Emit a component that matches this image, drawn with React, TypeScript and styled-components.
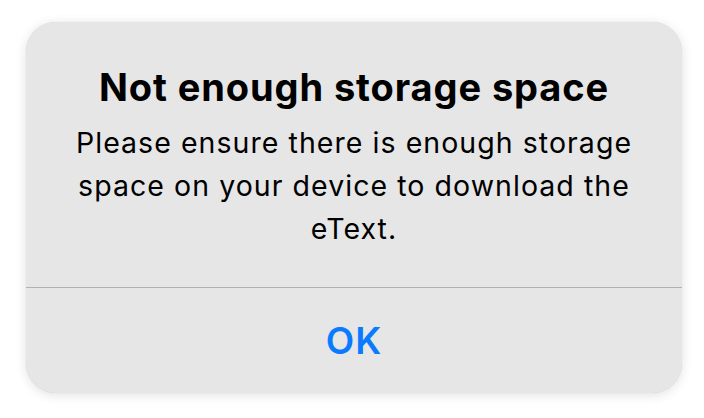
import React from "react";
import styled, { createGlobalStyle } from "styled-components";

const Global = createGlobalStyle`
  html, body { margin: 0; padding: 0; background: #ffffff; }
  body { font-family: Inter, "Noto Sans", sans-serif; -webkit-font-smoothing: antialiased; }
`;

const Page = styled.div`
  width: 704px;
  height: 418px;
  box-sizing: border-box;
  padding: 22px 22px 25px 26px;
  display: flex;
`;

const Card = styled.div`
  flex: 1;
  background: #e6e6e6;
  border-radius: 30px;
  box-shadow: 0 2px 12px rgba(0, 0, 0, 0.12), 0 0 1px rgba(0, 0, 0, 0.15);
  display: flex;
  flex-direction: column;
  overflow: hidden;
`;

const Body = styled.div`
  height: 265px;
  box-sizing: border-box;
  padding: 43px 36px 0;
  display: flex;
  flex-direction: column;
  align-items: center;
  text-align: center;
`;

const Title = styled.h1`
  margin: 0;
  font-size: 38px;
  font-weight: 700;
  line-height: 44px;
  color: #000;
  letter-spacing: 0.9px;
  white-space: nowrap;
`;

const Message = styled.p`
  margin: 12px 0 0;
  font-size: 28.5px;
  font-weight: 400;
  line-height: 43px;
  color: #000;
  letter-spacing: 1.05px;
`;

const Divider = styled.div`
  height: 1px;
  background: #b1b1b1;
`;

const Button = styled.button`
  flex: 1;
  border: none;
  background: transparent;
  font-family: Inter, "Noto Sans", sans-serif;
  font-size: 37px;
  font-weight: 600;
  color: #0a7aff;
  letter-spacing: 1px;
  display: flex;
  align-items: center;
  justify-content: center;
  padding: 0;
`;

export default function App() {
  return (
    <>
      <Global />
      <Page>
        <Card>
          <Body>
            <Title>Not enough storage space</Title>
            <Message>
              Please ensure there is enough storage space on your device to download the eText.
            </Message>
          </Body>
          <Divider />
          <Button>OK</Button>
        </Card>
      </Page>
    </>
  );
}
